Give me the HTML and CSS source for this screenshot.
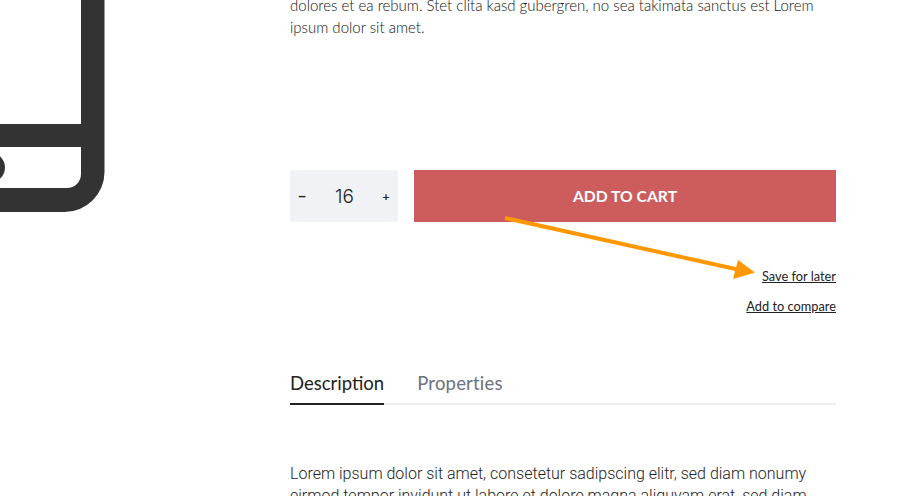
FILE: index.html
```html
<!DOCTYPE html>
<html lang="en">
<head>
<meta charset="utf-8">
<title>Product</title>
<link rel="stylesheet" href="styles.css">
</head>
<body>
<div class="page">
  <div class="media">
    <svg class="phone" width="105" height="212" viewBox="0 0 105 212" aria-hidden="true">
      <path fill="#333" fill-rule="evenodd" d="M81 0H104.500V172A40 40 0 0 1 64.500 212H0V188H67A14 14 0 0 0 81 174V147H0V124H81Z"/>
      <circle fill="#333" cx="-10" cy="167.500" r="15"/>
    </svg>
  </div>
  <main class="info">
    <p class="intro">dolores et ea rebum. Stet clita kasd gubergren, no sea takimata sanctus est Lorem<br>ipsum dolor sit amet.</p>
    <div class="buy">
      <div class="qty">
        <span class="qty-btn minus">−</span>
        <span class="qty-val">16</span>
        <span class="qty-btn plus">+</span>
      </div>
      <button class="cart">ADD TO CART</button>
    </div>
    <div class="links">
      <a class="link" href="#">Save for later</a>
      <a class="link" href="#">Add to compare</a>
    </div>
    <nav class="tabs">
      <span class="tab active">Description</span>
      <span class="tab">Properties</span>
    </nav>
    <p class="desc">Lorem ipsum dolor sit amet, consetetur sadipscing elitr, sed diam nonumy<br>eirmod tempor invidunt ut labore et dolore magna aliquyam erat, sed diam</p>
  </main>
</div>
<svg class="arrow" width="920" height="496" viewBox="0 0 920 496" aria-hidden="true">
  <path d="M505 218L740 270" stroke="#ff9800" stroke-width="4" fill="none"/>
  <path d="M738 260L755 272.500L733 279Z" fill="#ff9800"/>
</svg>
</body>
</html>
```
FILE: styles.css
```css
html, body { margin: 0; padding: 0; height: 496px; overflow: hidden; background: #fff; }
body { position: relative; font-family: "Lato", "Liberation Sans", sans-serif; color: #222; }
.page { display: flex; height: 496px; overflow: hidden; }
.media { width: 290px; flex: none; }
.phone { display: block; }
.info { width: 546px; flex: none; }
.intro { margin: -6px 0 0; font-size: 15px; font-weight: 300; color: #111; line-height: 22px; height: 44px; white-space: nowrap; }
.buy { display: flex; gap: 16px; margin-top: 132px; height: 52px; }
.qty { width: 108px; background: #f0f2f5; display: flex; align-items: center; justify-content: space-between; padding: 0 7px; box-sizing: border-box; }
.qty-btn { font-weight: 700; color: #222; width: 10px; text-align: center; }
.minus { font-size: 15px; }
.plus { font-size: 12px; }
.qty-val { font-size: 19px; font-family: "Inter", sans-serif; font-weight: 300; padding-left: 1px; }
.cart { flex: 1; border: 0; background: #cd5c5c; color: #fff; font: 700 15.700px "Lato", sans-serif; padding: 0; }
.links { display: flex; flex-direction: column; align-items: flex-end; gap: 15px; margin-top: 47px; }
.link { font-size: 12.800px; line-height: 15px; color: #222; text-decoration: underline; }
.tabs { display: flex; gap: 33px; margin-top: 52px; border-bottom: 2px solid #eee; height: 37px; }
.tab { font-size: 18.500px; font-weight: 400; line-height: 34px; color: #6b7280; height: 37px; letter-spacing: .2px; }
.tab.active { color: #222; border-bottom: 2px solid #222; letter-spacing: 0; }
.desc { margin: 58px 0 0; font-family: "Roboto", sans-serif; font-weight: 300; font-size: 16px; line-height: 22px; white-space: nowrap; }
.arrow { position: absolute; left: 0; top: 0; pointer-events: none; }
```
